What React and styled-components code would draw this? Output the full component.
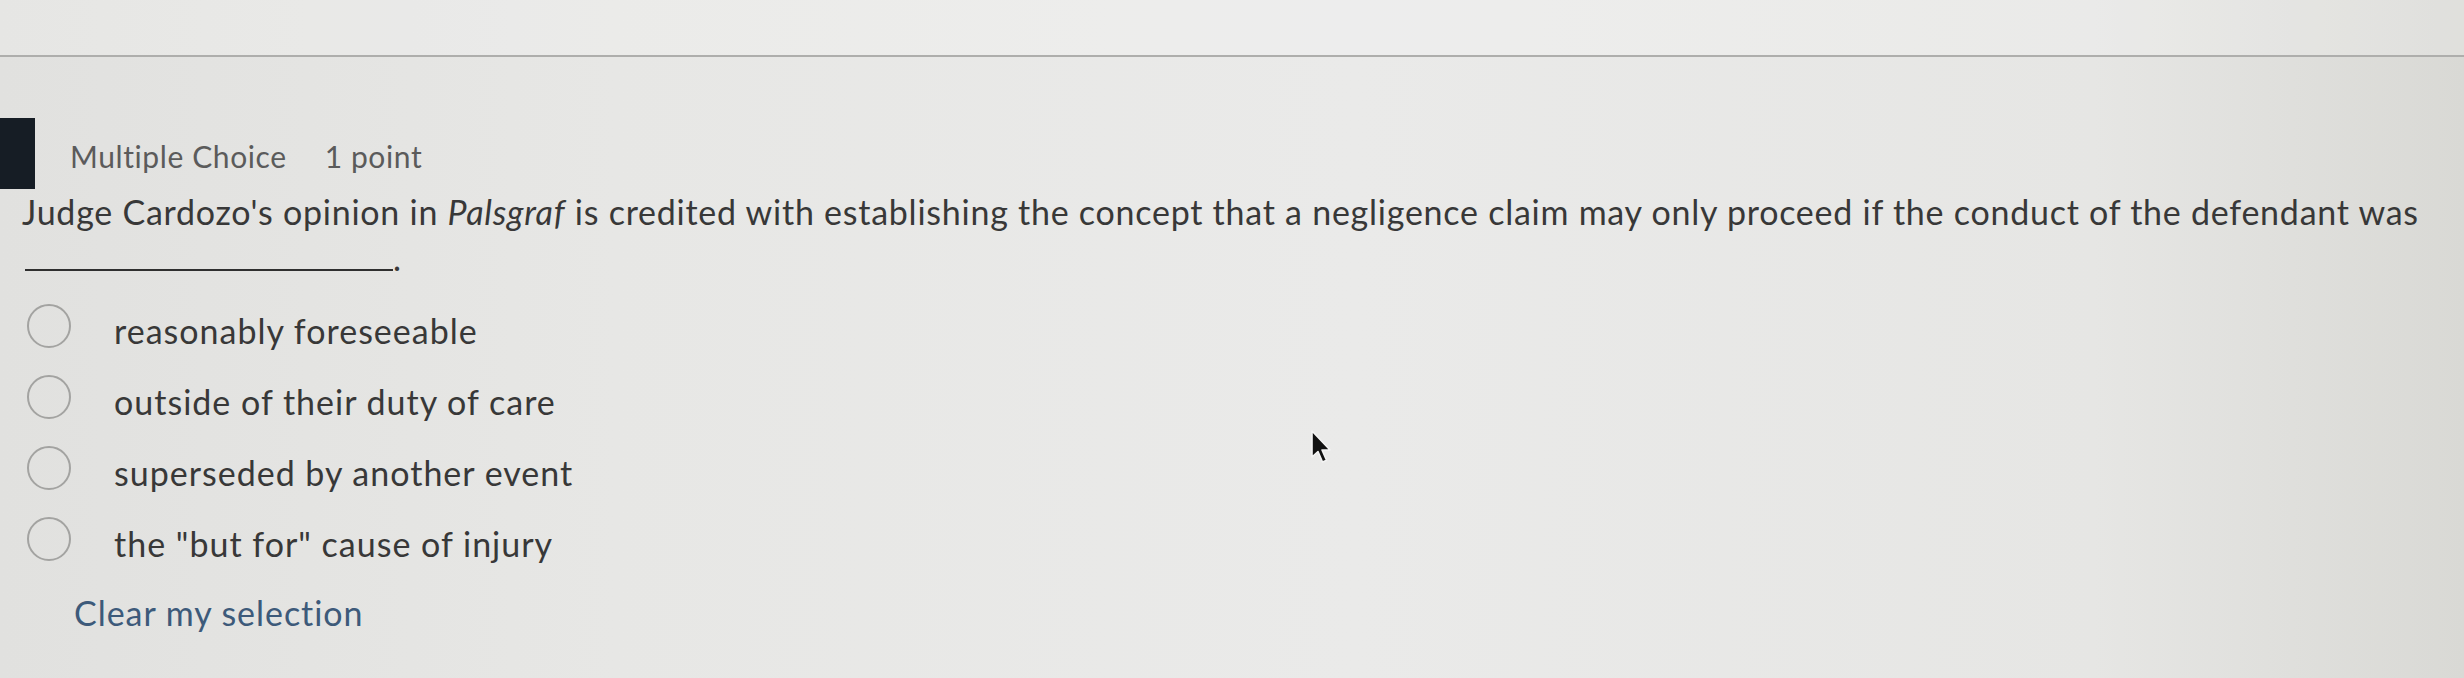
import React from "react";
import styled, { createGlobalStyle } from "styled-components";

const Global = createGlobalStyle`
  html, body { margin: 0; padding: 0; }
  body {
    width: 2464px;
    height: 678px;
    overflow: hidden;
    font-family: Lato, "Open Sans", "Liberation Sans", sans-serif;
    background: linear-gradient(90deg, #e1e1df 0%, #e7e7e5 25%, #eaeae9 55%, #e6e6e4 85%, #d9d9d5 100%);
  }
`;

const Page = styled.div`
  position: relative;
  width: 2464px;
  height: 678px;
`;

const TopStrip = styled.div`
  height: 55px;
  background: rgba(255, 255, 255, 0.18);
`;

const Divider = styled.div`
  height: 2px;
  background: #aeaeac;
`;

const Header = styled.div`
  display: flex;
  align-items: center;
  margin-top: 61px;
  height: 71px;
`;

const Bar = styled.div`
  width: 35px;
  height: 71px;
  background: #161d25;
`;

const HeaderText = styled.span`
  font-size: 30px;
  letter-spacing: 0.6px;
  color: #5b5b5b;
  margin-left: ${(p) => p.$gap}px;
  padding-top: 4px;
`;

const Question = styled.p`
  margin: 0;
  padding: 0 20px 0 22px;
  font-size: 34px;
  letter-spacing: 0.75px;
  line-height: 46px;
  color: #383838;
`;

const Blank = styled.span`
  display: inline-block;
  width: 368px;
  height: 2px;
  margin-left: 3px;
  background: #2f2f2f;
  vertical-align: 0;
`;

const Options = styled.div`
  display: flex;
  flex-direction: column;
  margin-top: 14px;
`;

const OptionRow = styled.label`
  display: flex;
  align-items: center;
  height: 71px;
  padding-left: 27px;
  font-size: 34px;
  letter-spacing: 1px;
  line-height: 71px;
  color: #383838;
`;

const Radio = styled.span`
  box-sizing: border-box;
  width: 44px;
  height: 44px;
  border-radius: 50%;
  border: 2px solid #a3a3a1;
  margin-bottom: 9px;
  margin-right: 43px;
  flex: none;
`;

const ClearLink = styled.a`
  display: block;
  margin: 13px 0 0 74px;
  font-size: 34px;
  letter-spacing: 0.95px;
  line-height: 41px;
  color: #3d5a7a;
  text-decoration: none;
`;

const Cursor = styled.svg`
  position: absolute;
  left: 1309px;
  top: 429px;
`;

const options = [
  "reasonably foreseeable",
  "outside of their duty of care",
  "superseded by another event",
  'the "but for" cause of injury',
];

export default function App() {
  return (
    <>
      <Global />
      <Page>
        <TopStrip />
        <Divider />
        <Header>
          <Bar />
          <HeaderText $gap={35}>Multiple Choice</HeaderText>
          <HeaderText $gap={38}>1 point</HeaderText>
        </Header>
        <Question>
          Judge Cardozo's opinion in <i>Palsgraf</i> is credited with establishing the concept that a
          negligence claim may only proceed if the conduct of the defendant was <Blank />.
        </Question>
        <Options>
          {options.map((o) => (
            <OptionRow key={o}>
              <Radio />
              {o}
            </OptionRow>
          ))}
        </Options>
        <ClearLink href="#">Clear my selection</ClearLink>
        <Cursor width="24" height="38" viewBox="0 0 24 38">
          <path
            d="M3 2 L3 28 L9 22.5 L13.5 33 L17.5 31.2 L13 21 L21 21 Z"
            fill="#111"
            stroke="#f4f4f4"
            strokeWidth="1.6"
            strokeLinejoin="round"
          />
        </Cursor>
      </Page>
    </>
  );
}
